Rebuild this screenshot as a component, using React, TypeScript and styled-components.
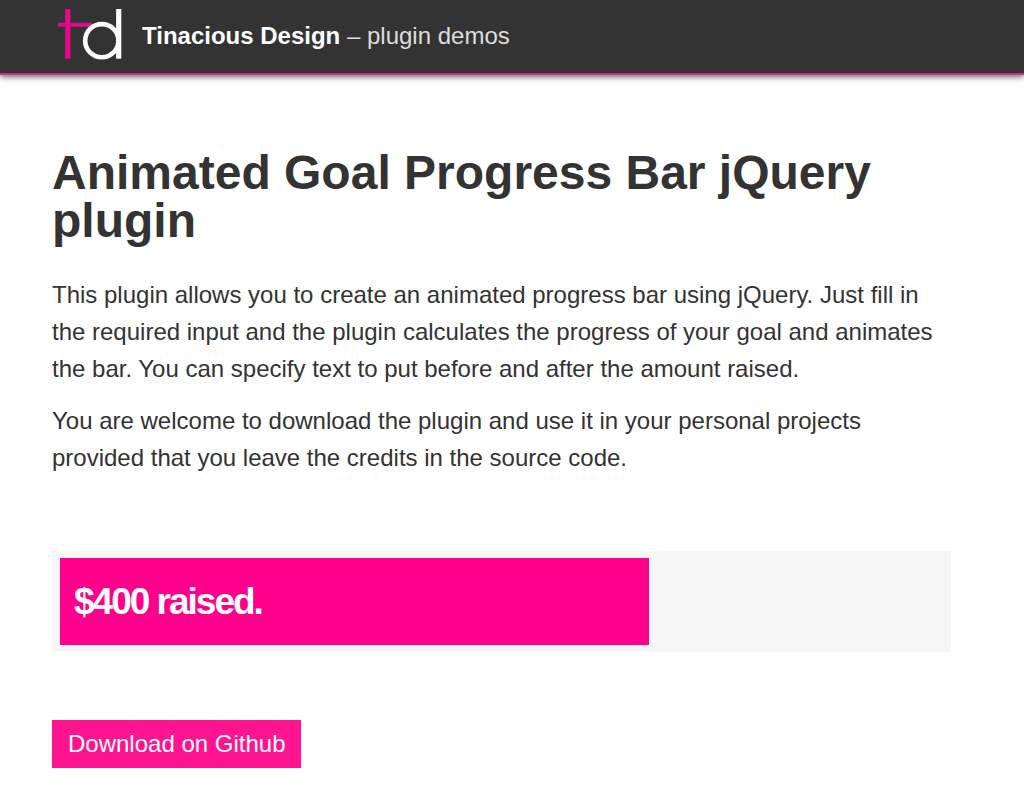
import React from 'react';
import styled, { createGlobalStyle } from 'styled-components';

const GlobalStyle = createGlobalStyle`
  * { box-sizing: border-box; }
  body {
    margin: 0;
    background: #fff;
    color: #333;
    font-family: "Liberation Sans", Arial, sans-serif;
  }
`;

const Header = styled.header`
  display: flex;
  align-items: center;
  gap: 20px;
  padding: 7px 56px 9px;
  background: #333;
  border-bottom: 2px solid #c93384;
  box-shadow: 0 2px 6px rgba(0, 0, 0, 0.6);
`;

const Logo = styled.svg`
  flex: none;
  display: block;
  width: 66px;
  height: 57px;
`;

const SiteTitle = styled.p`
  margin: 0;
  color: #ddd;
  font-size: 24px;
  line-height: 32px;

  strong { color: #fff; }
`;

const Main = styled.main`
  padding: 74px 73px 20px 52px;
`;

const Title = styled.h1`
  margin: 0 0 31px;
  font-size: 48px;
  line-height: 48px;
`;

const Paragraph = styled.p`
  margin: 0 0 15px;
  font-size: 24px;
  line-height: 37px;
`;

const Track = styled.div`
  margin: 75px 0 68px;
  padding: 7px 8px;
  background: #f6f6f6;
`;

const Fill = styled.div`
  padding: 22px 14px;
  background: #ff008c;
  color: #fff;
  font-size: 37px;
  font-weight: bold;
  line-height: 43px;
  letter-spacing: -2px;
  white-space: nowrap;
`;

const DownloadLink = styled.a`
  display: inline-block;
  padding: 8px 16px;
  background: #ff148f;
  color: #fff;
  font-size: 24px;
  line-height: 32px;
  text-decoration: none;
`;

const raised = 400;
const goal = 600;

export default function App() {
  return (
    <>
      <GlobalStyle />
      <Header>
        <Logo viewBox="0 0 66 57" role="img" aria-label="Tinacious Design">
          <path d="M2 17.7H36" fill="none" stroke="#e2098a" strokeWidth="4" />
          <path d="M11.8 2V51.7" fill="none" stroke="#e2098a" strokeWidth="5.4" />
          <circle cx="45.8" cy="33.7" r="16.6" fill="#333" stroke="#fff" strokeWidth="4.6" />
          <path d="M62.7 2V51.7" fill="none" stroke="#fff" strokeWidth="5.2" />
        </Logo>
        <SiteTitle><strong>Tinacious Design</strong> – plugin demos</SiteTitle>
      </Header>
      <Main>
        <Title>Animated Goal Progress Bar jQuery plugin</Title>
        <Paragraph>
          This plugin allows you to create an animated progress bar using jQuery. Just fill in the
          required input and the plugin calculates the progress of your goal and animates the bar.
          You can specify text to put before and after the amount raised.
        </Paragraph>
        <Paragraph>
          You are welcome to download the plugin and use it in your personal projects provided that
          you leave the credits in the source code.
        </Paragraph>
        <Track role="progressbar" aria-label="Amount raised" aria-valuenow={raised} aria-valuemin={0} aria-valuemax={goal}>
          <Fill style={{ width: `${(raised / goal) * 100}%` }}>${raised} raised.</Fill>
        </Track>
        <DownloadLink href="#download">Download on Github</DownloadLink>
      </Main>
    </>
  );
}
